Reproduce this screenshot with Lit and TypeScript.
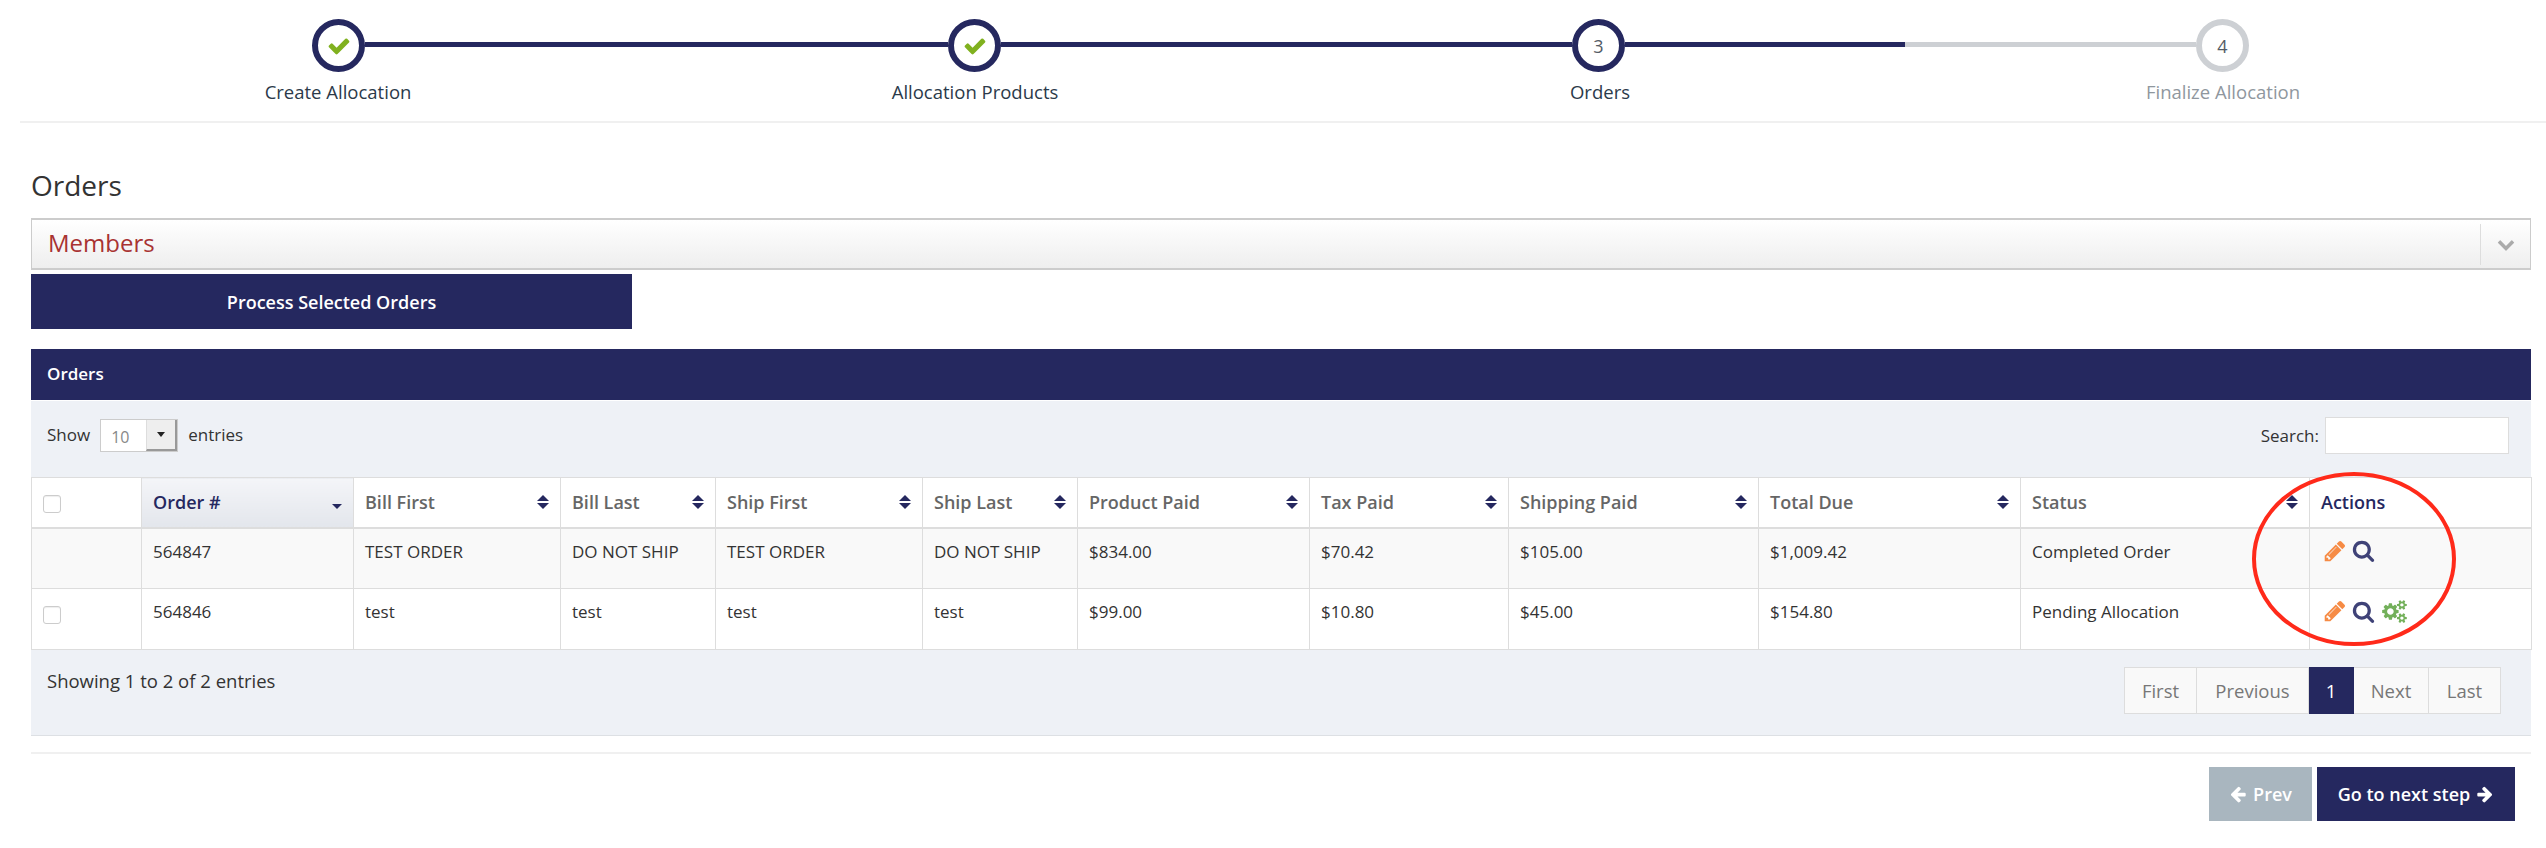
import { LitElement, html, css, svg } from "lit";
import { customElement } from "lit/decorators.js";

const P = {
  check: "M1671 566q0 40-28 68l-724 724-136 136q-28 28-68 28t-68-28l-136-136-362-362q-28-28-28-68t28-68l136-136q28-28 68-28t68 28l294 295 656-657q28-28 68-28t68 28l136 136q28 28 28 68z",
  search: "M1216 832q0-185-131.500-316.500t-316.500-131.500-316.500 131.500-131.500 316.500 131.500 316.500 316.500 131.500 316.500-131.500 131.500-316.500zm512 832q0 52-38 90t-90 38q-54 0-90-38l-343-342q-179 124-399 124-143 0-273.500-55.500t-225-150-150-225-55.500-273.500 55.500-273.500 150-225 225-150 273.500-55.500 273.500 55.500 225 150 150 225 55.500 273.500q0 220-124 399l343 343q37 37 37 90z",
  pencil: "M491 1536l91-91-235-235-91 91v107h128v128h107zm523-928q0-22-22-22-10 0-17 7l-542 542q-7 7-7 17 0 22 22 22 10 0 17-7l542-542q7-7 7-17zm-54-192l416 416-832 832h-416v-416zm683 96q0 53-37 90l-166 166-416-416 166-165q36-38 90-38 53 0 91 38l235 234q37 39 37 91z",
  right: "M1600 960q0 54-37 91l-651 651q-39 37-91 37-51 0-90-37l-75-75q-38-38-38-91t38-91l293-293h-704q-52 0-84.500-37.500t-32.500-90.500v-128q0-53 32.500-90.500t84.500-37.500h704l-293-294q-38-36-38-90t38-90l75-75q38-38 90-38 53 0 91 38l651 651q37 35 37 90z",
  left: "M1664 896v128q0 53-32.500 90.500t-84.500 37.500h-704l293 294q38 36 38 90t-38 90l-75 75q-38 38-90 38-53 0-91-38l-651-651q-37-37-37-90 0-54 37-91l651-650q38-38 91-38 52 0 90 38l75 74q38 38 38 91t-38 91l-293 293h704q52 0 84.500 37.500t32.500 90.500z",
  chevron: "M1683 808l-742 741q-19 19-45 19t-45-19l-742-741q-19-19-19-45.500t19-45.500l166-165q19-19 45-19t45 19l531 531 531-531q19-19 45-19t45 19l166 165q19 19 19 45.500t-19 45.500z",
  cogs: "M896 896q0-106-75-181t-181-75-181 75-75 181 75 181 181 75 181-75 75-181zm768 512q0-52-38-90t-90-38-90 38-38 90q0 53 37.500 90.500t90.500 37.500 90.500-37.500 37.500-90.500zm0-1024q0-52-38-90t-90-38-90 38-38 90q0 53 37.500 90.500t90.500 37.500 90.500-37.500 37.500-90.500zm-384 421v185q0 10-7 19.500t-16 10.500l-155 24q-11 35-32 76 34 48 90 115 7 11 7 20 0 12-7 19-23 30-82.500 89.500t-78.500 59.500q-11 0-21-7l-115-90q-37 19-77 31-11 108-23 155-7 24-30 24h-186q-11 0-20-7.500t-10-17.500l-23-153q-34-10-75-31l-118 89q-7 7-20 7-11 0-21-8-144-133-144-160 0-9 7-19 10-14 41-53t47-61q-23-44-35-82l-152-24q-10-1-17-9.500t-7-19.500v-185q0-10 7-19.500t16-10.500l155-24q11-35 32-76-34-48-90-115-7-11-7-20 0-12 7-20 22-30 82-89t79-59q11 0 21 7l115 90q34-18 77-32 11-108 23-154 7-24 30-24h186q11 0 20 7.500t10 17.500l23 153q34 10 75 31l118-89q8-7 20-7 11 0 21 8 144 133 144 160 0 8-7 19-12 16-42 54t-45 60q23 48 34 82l152 23q10 2 17 10.500t7 19.500zm640 533v140q0 16-149 31-12 27-30 52 51 113 51 138 0 4-4 7-122 71-124 71-8 0-46-47t-52-68q-20 2-30 2t-30-2q-14 21-52 68t-46 47q-2 0-124-71-4-3-4-7 0-25 51-138-18-25-30-52-149-15-149-31v-140q0-16 149-31 13-29 30-52-51-113-51-138 0-4 4-7 4-2 35-20t59-34 30-16q8 0 46 46.500t52 67.500q20-2 30-2t30 2q51-71 92-112l6-2q4 0 124 70 4 3 4 7 0 25-51 138 17 23 30 52 149 15 149 31zm0-1024v140q0 16-149 31-12 27-30 52 51 113 51 138 0 4-4 7-122 71-124 71-8 0-46-47t-52-68q-20 2-30 2t-30-2q-14 21-52 68t-46 47q-2 0-124-71-4-3-4-7 0-25 51-138-18-25-30-52-149-15-149-31v-140q0-16 149-31 13-29 30-52-51-113-51-138 0-4 4-7 4-2 35-20t59-34 30-16q8 0 46 46.500t52 67.500q20-2 30-2t30 2q51-71 92-112l6-2q4 0 124 70 4 3 4 7 0 25-51 138 17 23 30 52 149 15 149 31z",
};

const icon = (d: string, cls: string, vb = "0 0 1792 1792") =>
  html`<svg class="ic ${cls}" viewBox=${vb} aria-hidden="true">${svg`<path d=${d} fill="currentColor"></path>`}</svg>`;

const HEAD = ["Order #", "Bill First", "Bill Last", "Ship First", "Ship Last", "Product Paid", "Tax Paid", "Shipping Paid", "Total Due", "Status"];
const WIDTHS = [110, 212, 207, 155, 207, 155, 232, 199, 250, 262, 289, 222];
const ROWS = [
  { check: false, gear: false, cells: ["564847", "TEST ORDER", "DO NOT SHIP", "TEST ORDER", "DO NOT SHIP", "$834.00", "$70.42", "$105.00", "$1,009.42", "Completed Order"] },
  { check: true, gear: true, cells: ["564846", "test", "test", "test", "test", "$99.00", "$10.80", "$45.00", "$154.80", "Pending Allocation"] },
];

@customElement("app-root")
export class AppRoot extends LitElement {
  static styles = css`
    :host { display: block; position: relative; width: 2546px; height: 848px; background: #fff; overflow: hidden;
      font-family: "Open Sans", "Liberation Sans", sans-serif; font-size: 17px; color: #333; }
    * { box-sizing: border-box; }
    .ic { display: block; flex: none; }

    .wizard { margin-left: 20px; height: 123px; border-bottom: 2px solid #f0f0f0; padding-top: 19px; }
    .track { display: flex; padding-left: 292px; }
    .circle { width: 53px; height: 53px; flex: none; border-radius: 50%; border: 6px solid #25285f; background: #fff;
      display: flex; align-items: center; justify-content: center; font-size: 18px; color: #555c66; }
    .circle.todo { border-color: #cdd0d4; }
    .check { width: 24px; height: 24px; color: #80b11f; }
    .seg { height: 5px; margin-top: 23px; background: #25285f; flex: none; }
    .seg.a { width: 583px; } .seg.b { width: 571px; } .seg.c { width: 280px; }
    .seg.d { width: 291px; background: #cdd0d4; }
    .labels { display: flex; padding-left: 218px; margin-top: 7px; line-height: 26px; color: #2b3a4a; font-size: 18.5px; }
    .labels span { width: 200px; text-align: center; flex: none; }
    .labels .l2 { margin-left: 437px; } .labels .l3 { margin-left: 425px; } .labels .l4 { margin-left: 423px; color: #8f979e; }

    .main { padding: 0 15px 0 31px; }
    h1 { margin: 42px 0 0; font-size: 28px; font-weight: 400; line-height: 40px; color: #333; }
    .members { margin-top: 13px; height: 52px; border: 1px solid #ccc; border-width: 2px 1px; background: linear-gradient(#fff, #eee);
      display: flex; align-items: center; justify-content: space-between; }
    .members b { font-weight: 400; font-size: 24px; color: #a83232; padding: 0 0 3px 16px; }
    .members .chev { width: 50px; height: 41px; border-left: 1px solid #ddd; display: flex; align-items: center; justify-content: center; color: #aaa; }
    .chev .ic { width: 18px; height: 18px; }
    .process { display: block; margin-top: 4px; width: 601px; height: 55px; border: 0; background: #25285f; color: #fff;
      font: 600 18px "Open Sans", sans-serif; padding: 0; }

    .panel { margin-top: 20px; background: #eef1f6; height: 387px; border-bottom: 1px solid #dde0e4; }
    .panel-head { height: 52px; background: #25285f; color: #fff; font-weight: 600; padding: 0 16px; line-height: 50px; border-bottom: 1px solid #fff; }
    .tools { height: 76px; display: flex; justify-content: space-between; padding: 16px 22px 0 16px; }
    .len { display: flex; align-items: center; height: 34px; gap: 10px; }
    .sel { width: 78px; height: 33px; margin-top: 3px; background: #fff; border: 1px solid #ccc; display: flex; justify-content: space-between; color: #888; font-size: 16px; padding-left: 10px; line-height: 34px; }
    .sel i { width: 31px; height: 100%; background: #eee; border-left: 1px solid #ddd; border-right: 2px solid #999; border-bottom: 2px solid #999; display: flex; align-items: center; justify-content: center; }
    .sel i::after { content: ""; border: 4px solid transparent; border-top: 5px solid #222; border-bottom: 0; }
    .srch { display: flex; align-items: center; gap: 6px; height: 37px; }
    .srch input { width: 184px; height: 37px; border: 1px solid #ddd; background: #fff; padding: 0; }

    table { border-collapse: collapse; table-layout: fixed; width: 2500px; background: #fff; }
    th, td { border: 1px solid #ddd; text-align: left; vertical-align: top; padding: 10px 11px 0; line-height: 26px; }
    th { height: 50px; font-weight: 600; font-size: 18px; color: #666; border-bottom: 2px solid #ddd; position: relative; padding-top: 11px; }
    th.navy { color: #25285f; }
    th.sorted { background: linear-gradient(#f4f5f8, #e3e6ec); }
    tbody td { height: 61px; }
    tbody tr.odd td { background: #f9f9f9; }
    .cb { display: block; width: 18px; height: 18px; margin-top: 7px; border: 1px solid #ccc; border-radius: 3px; background: #fff; box-shadow: inset 0 1px 1px #eee; }
    th .cb { margin-top: 6px; }
    .sort { position: absolute; right: 11px; top: 17px; display: flex; flex-direction: column; gap: 2px; }
    .sort::before { content: ""; border: 6px solid transparent; border-bottom: 6px solid #25285f; border-top: 0; }
    .sort::after { content: ""; border: 6px solid transparent; border-top: 6px solid #25285f; border-bottom: 0; }
    .sort.desc { top: 26px; }
    .sort.desc::before { display: none; }
    .sort.desc::after { border-width: 5px 5px 0; }
    .acts { display: flex; align-items: center; gap: 5px; padding-left: 2px; }
    .pen { width: 24px; height: 24px; color: #f68b45; }
    .mag { width: 23px; height: 23px; color: #3f4277; }
    .gear { width: 25px; height: 23px; color: #73b05a; margin-left: 2px; }

    .foot { display: flex; justify-content: space-between; padding: 17px 30px 0 16px; }
    .info { line-height: 26px; margin-top: 1px; font-size: 18.5px; }
    .pager { display: flex; height: 47px; color: #777; }
    .pager span { border: 1px solid #ddd; border-left-width: 0; background: #f9f9f9; display: flex; align-items: center; justify-content: center; font-size: 18.5px; }
    .pager span:first-child { border-left-width: 1px; }
    .pager .p1 { width: 73px; } .pager .p2 { width: 112px; }
    .pager .cur { width: 45px; background: #25285f; border-color: #25285f; color: #fff; }
    .pager .p3 { width: 75px; } .pager .p4 { width: 72px; }

    .rule { margin-top: 16px; border-top: 2px solid #f0f0f0; }
    .btns { display: flex; justify-content: flex-end; gap: 5px; margin-top: 13px; padding-right: 16px; }
    .btn { height: 54px; display: flex; align-items: center; justify-content: center; gap: 6px; color: #fff; font-weight: 600; font-size: 18px; }
    .btn .ic { width: 18px; height: 18px; }
    .btn.prev { width: 103px; background: #a9b6bf; }
    .btn.next { width: 198px; background: #25285f; }

    .ring { position: absolute; left: 2252px; top: 472px; width: 204px; height: 174px; pointer-events: none; }
  `;

  render() {
    return html`
      <div class="wizard">
        <div class="track">
          <div class="circle">${icon(P.check, "check")}</div><div class="seg a"></div>
          <div class="circle">${icon(P.check, "check")}</div><div class="seg b"></div>
          <div class="circle">3</div><div class="seg c"></div><div class="seg d"></div>
          <div class="circle todo">4</div>
        </div>
        <div class="labels">
          <span>Create Allocation</span><span class="l2">Allocation Products</span><span class="l3">Orders</span><span class="l4">Finalize Allocation</span>
        </div>
      </div>
      <div class="main">
        <h1>Orders</h1>
        <div class="members"><b>Members</b><div class="chev">${icon(P.chevron, "")}</div></div>
        <button class="process">Process Selected Orders</button>
        <div class="panel">
          <div class="panel-head">Orders</div>
          <div class="tools">
            <div class="len">Show <div class="sel">10<i></i></div> entries</div>
            <div class="srch">Search: <input type="text" /></div>
          </div>
          <table>
            <colgroup>${WIDTHS.map((w) => html`<col style="width:${w}px" />`)}</colgroup>
            <thead><tr>
              <th><span class="cb"></span></th>
              ${HEAD.map((h, i) => html`<th class="${i === 0 ? "navy sorted" : ""}">${h}<span class="sort ${i === 0 ? "desc" : ""}"></span></th>`)}
              <th class="navy">Actions</th>
            </tr></thead>
            <tbody>
              ${ROWS.map((r, i) => html`<tr class="${i === 0 ? "odd" : ""}">
                <td>${r.check ? html`<span class="cb"></span>` : ""}</td>
                ${r.cells.map((c) => html`<td>${c}</td>`)}
                <td><div class="acts">
                  ${icon(P.pencil, "pen")}${icon(P.search, "mag")}${r.gear ? icon(P.cogs, "gear", "0 0 1920 1792") : ""}
                </div></td>
              </tr>`)}
            </tbody>
          </table>
          <div class="foot">
            <div class="info">Showing 1 to 2 of 2 entries</div>
            <div class="pager"><span class="p1">First</span><span class="p2">Previous</span><span class="cur">1</span><span class="p3">Next</span><span class="p4">Last</span></div>
          </div>
        </div>
        <div class="rule"></div>
        <div class="btns">
          <div class="btn prev">${icon(P.left, "")}Prev</div>
          <div class="btn next">Go to next step ${icon(P.right, "")}</div>
        </div>
      </div>
      <svg class="ring" viewBox="0 0 204 174" aria-hidden="true"><ellipse cx="102" cy="87" rx="100" ry="85" fill="none" stroke="#ff2a1a" stroke-width="4"></ellipse></svg>
    `;
  }
}
